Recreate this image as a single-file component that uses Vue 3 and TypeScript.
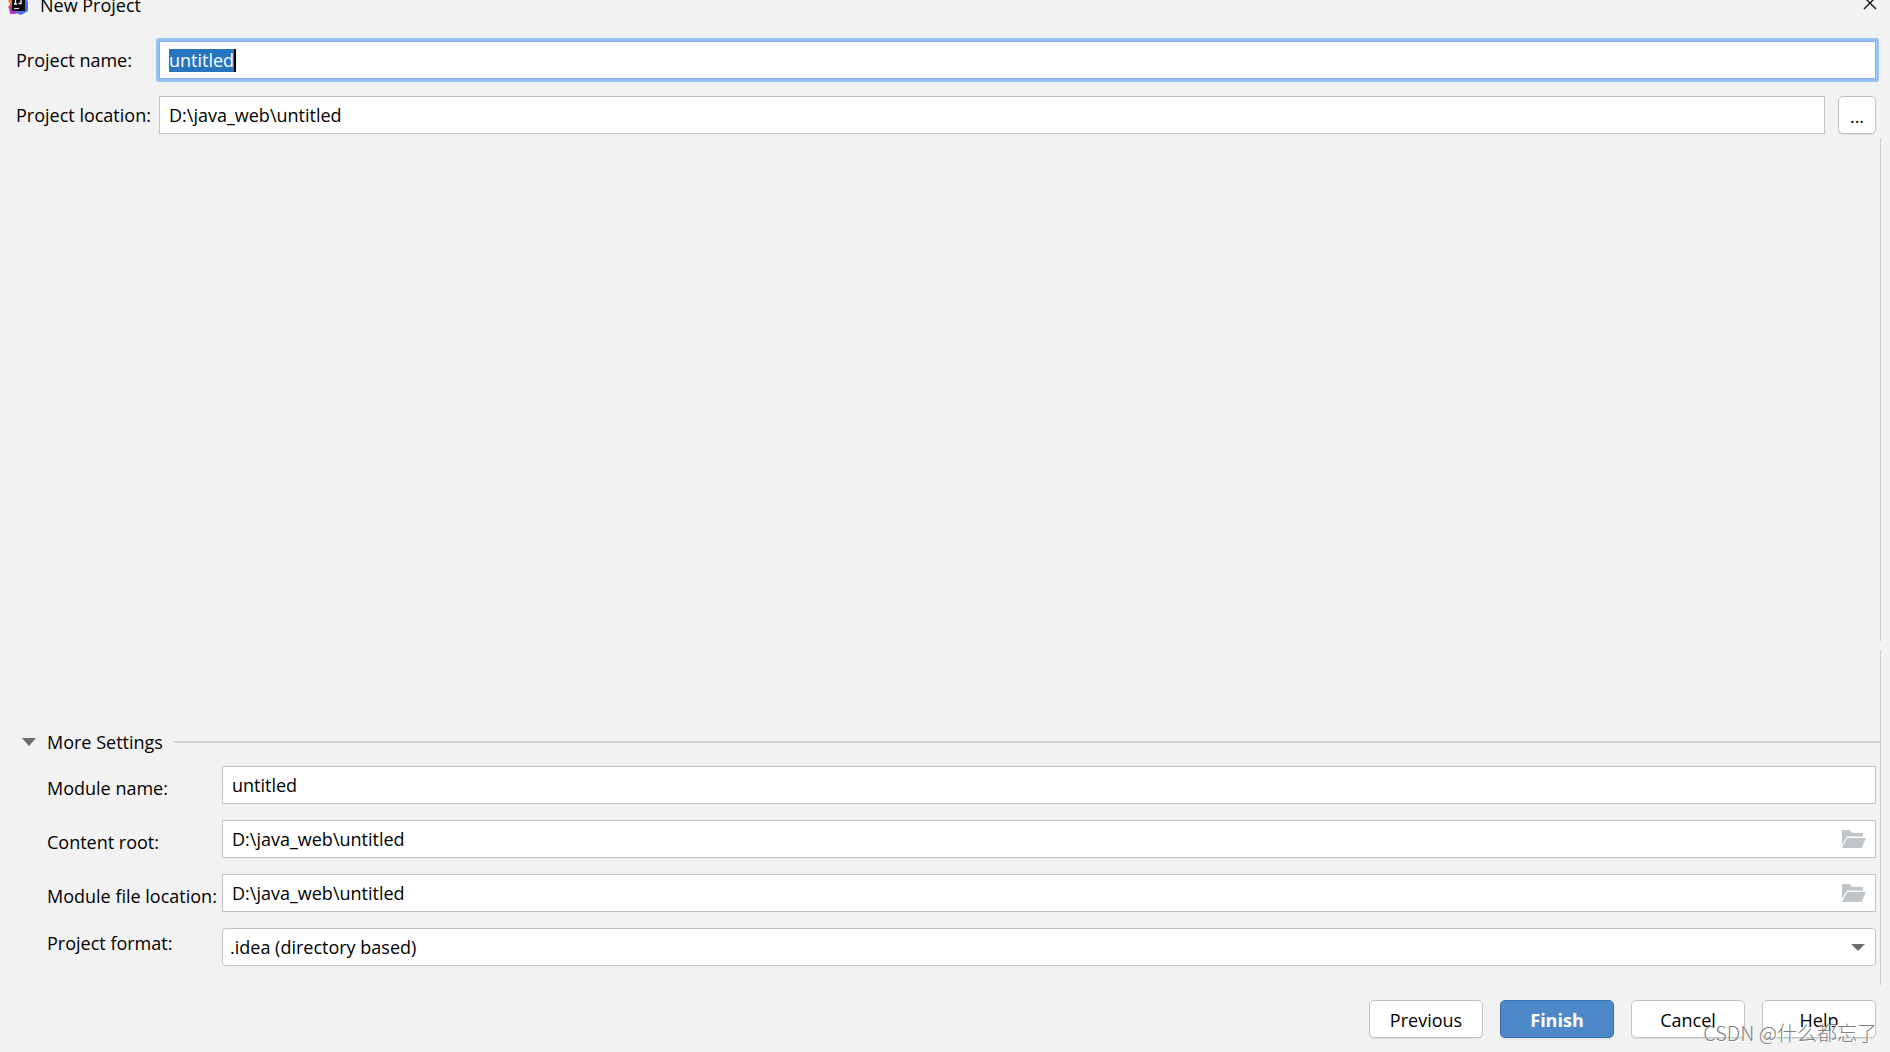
<script setup lang="ts">
import { onMounted, ref } from 'vue'

interface ModuleField {
  id: string
  label: string
  browse: boolean
}

const projectName = ref('untitled')
const projectLocation = ref('D:\\java_web\\untitled')
const format = ref('idea')
const nameInput = ref<HTMLInputElement | null>(null)

const moduleFields: ModuleField[] = [
  { id: 'module-name', label: 'Module name:', browse: false },
  { id: 'content-root', label: 'Content root:', browse: true },
  { id: 'module-file', label: 'Module file location:', browse: true },
]

const values = ref<Record<string, string>>({
  'module-name': 'untitled',
  'content-root': 'D:\\java_web\\untitled',
  'module-file': 'D:\\java_web\\untitled',
})

onMounted(() => {
  nameInput.value?.focus()
  nameInput.value?.select()
})
</script>

<template>
  <div class="dialog">
    <header class="titlebar">
      <svg class="logo" width="20" height="20" viewBox="0 0 20 20" aria-hidden="true">
        <defs>
          <linearGradient id="blue" x1="0" y1="0" x2="1" y2="1">
            <stop offset="0" stop-color="#7a4be0" />
            <stop offset="1" stop-color="#2f7cf6" />
          </linearGradient>
        </defs>
        <path d="M0 5 5 2v9l-2 5-3-4 2-3z" fill="#f9702e" />
        <path d="M1 12l3-3 5 7-1 3-6 0z" fill="#b936c8" />
        <path d="M9 0h8l3 7v9l-7 4-5-2z" fill="url(#blue)" />
        <rect x="4" y="2" width="13" height="14" fill="#080808" />
        <path d="M6 4h3M7.500 4v5M6 9h3M10 4h4M13 4v4.500H10.500" stroke="#fff" stroke-width="1.300" fill="none" />
        <path d="M6 13.500h5" stroke="#ddd" stroke-width="1.200" />
      </svg>
      <span class="title">New Project</span>
      <button class="close" type="button" aria-label="Close">
        <svg width="14" height="14" viewBox="0 0 14 14"><path d="M1 1l12 12M13 1L1 13" stroke="#111" stroke-width="1.400" /></svg>
      </button>
    </header>

    <main class="body">
      <form class="project" @submit.prevent>
        <label class="project-label" for="project-name">Project name:</label>
        <div class="field focused">
          <input id="project-name" ref="nameInput" v-model="projectName" class="name-input" type="text" />
          <span class="caret"></span>
        </div>
        <label class="project-label" for="project-location">Project location:</label>
        <div class="location">
          <input id="project-location" v-model="projectLocation" class="field" type="text" />
          <button class="button browse" type="button">...</button>
        </div>
      </form>

      <section class="panel empty"></section>

      <section class="panel settings">
        <h2 class="heading">
          <svg width="14" height="8" viewBox="0 0 14 8" aria-hidden="true"><path d="M0 0h14L7 8z" fill="#6e6e6e" /></svg>
          <span>More Settings</span>
          <span class="rule"></span>
        </h2>
        <div class="rows">
          <div v-for="f in moduleFields" :key="f.id" class="row">
            <label class="row-label" :for="f.id">{{ f.label }}</label>
            <div class="field">
              <input :id="f.id" v-model="values[f.id]" class="inner" type="text" />
              <button v-if="f.browse" class="folder" type="button" aria-label="Browse">
                <svg width="24" height="18" viewBox="0 0 24 18">
                  <path d="M0 0h8l2 3h11v3.500H5L0 15z" fill="#c0c5c9" />
                  <path d="M5 8h19l-4.500 10H0z" fill="#c0c5c9" />
                </svg>
              </button>
            </div>
          </div>
          <div class="row">
            <label class="row-label raised" for="format">Project format:</label>
            <div class="combo">
              <select id="format" v-model="format" class="field select">
                <option value="idea">.idea (directory based)</option>
                <option value="ipr">.ipr (file based)</option>
              </select>
              <svg class="arrow" width="14" height="7" viewBox="0 0 14 7" aria-hidden="true"><path d="M0 0h14L7 7z" fill="#6e6e6e" /></svg>
            </div>
          </div>
        </div>
      </section>
    </main>

    <footer class="footer">
      <button class="button" type="button">Previous</button>
      <button class="button primary" type="button">Finish</button>
      <button class="button" type="button">Cancel</button>
      <button class="button" type="button">Help</button>
    </footer>
    <span class="watermark">CSDN @什么都忘了</span>
  </div>
</template>

<style>
body {
  background: #f2f2f2;
}
</style>

<style scoped>
.dialog {
  position: relative;
  box-sizing: border-box;
  min-height: 100vh;
  display: flex;
  flex-direction: column;
  overflow: hidden;
  background: #f2f2f2;
  color: #000;
  font: 18px/24px "Open Sans", "Noto Sans", "Noto Sans CJK SC", sans-serif;
}
.dialog * {
  box-sizing: border-box;
}
input,
button,
select {
  margin: 0;
  font: inherit;
  color: inherit;
}
.titlebar {
  display: flex;
  align-items: center;
  height: 10px;
  padding: 0 13px 0 8px;
  gap: 12px;
}
.logo {
  flex: none;
}
.close {
  display: flex;
  margin-left: auto;
  padding: 0 0 4px;
  border: 0;
  background: none;
}
.body {
  flex: 1;
  display: flex;
  flex-direction: column;
  padding-right: 9px;
}
.project {
  display: grid;
  grid-template-columns: 143px 1fr;
  row-gap: 17px;
  align-items: center;
  padding: 31px 5px 4px 16px;
}
.field {
  display: flex;
  align-items: center;
  width: 100%;
  min-width: 0;
  height: 38px;
  padding: 0 9px;
  border: 1px solid #c4c4c4;
  border-radius: 0;
  background: #fff;
  outline: none;
}
.focused {
  border-color: #87afda;
  box-shadow: 0 0 0 3px #97c3f3;
  border-radius: 1px;
}
.name-input {
  field-sizing: content;
  height: 23px;
  padding: 0;
  border: 0;
  outline: none;
  background: none;
  line-height: 23px;
}
.name-input::selection {
  background: #2675bf;
  color: #fff;
}
.caret {
  width: 2px;
  height: 23px;
  background: #000;
}
.location {
  display: flex;
  gap: 13px;
}
.button {
  width: 114px;
  height: 38px;
  padding: 2px 0 0;
  border: 1px solid #c4c4c4;
  border-radius: 5px;
  background: #fff;
  box-shadow: 0 1px 1px #dcdcdc;
}
.browse {
  flex: none;
  width: 38px;
}
.panel {
  border-right: 1px solid #cdcdcd;
}
.empty {
  flex: 1;
}
.settings {
  margin-top: 9px;
  padding-top: 80px;
  padding-bottom: 19px;
}
.heading {
  display: flex;
  align-items: center;
  gap: 11px;
  margin: 0;
  padding-left: 22px;
  font: inherit;
}
.rule {
  flex: 1;
  height: 2px;
  background: #d1d1d1;
}
.rows {
  display: flex;
  flex-direction: column;
  gap: 16px;
  padding: 12px 4px 0 47px;
}
.row {
  display: grid;
  grid-template-columns: 175px 1fr;
  align-items: center;
}
.row-label {
  padding-top: 6px;
  white-space: nowrap;
}
.raised {
  padding: 0 0 8px;
}
.inner {
  flex: 1;
  min-width: 0;
  padding: 0;
  border: 0;
  outline: none;
  background: none;
}
.folder {
  display: flex;
  padding: 0;
  border: 0;
  background: none;
}
.combo {
  position: relative;
}
.select {
  appearance: none;
  padding: 0 7px;
  border-radius: 4px;
}
.arrow {
  position: absolute;
  right: 11px;
  top: 16px;
  pointer-events: none;
}
.footer {
  display: flex;
  justify-content: flex-end;
  gap: 17px;
  padding: 15px 14px 14px 0;
}
.primary {
  border-color: #3b74b4;
  background: #4d89c9;
  color: #fff;
  font-weight: 700;
}
.watermark {
  position: absolute;
  right: 13px;
  bottom: 7px;
  color: #808080;
  font: 300 20px/24px "Noto Sans CJK SC", sans-serif;
  text-shadow: 1px 1px 0 #fff;
  pointer-events: none;
}
</style>
